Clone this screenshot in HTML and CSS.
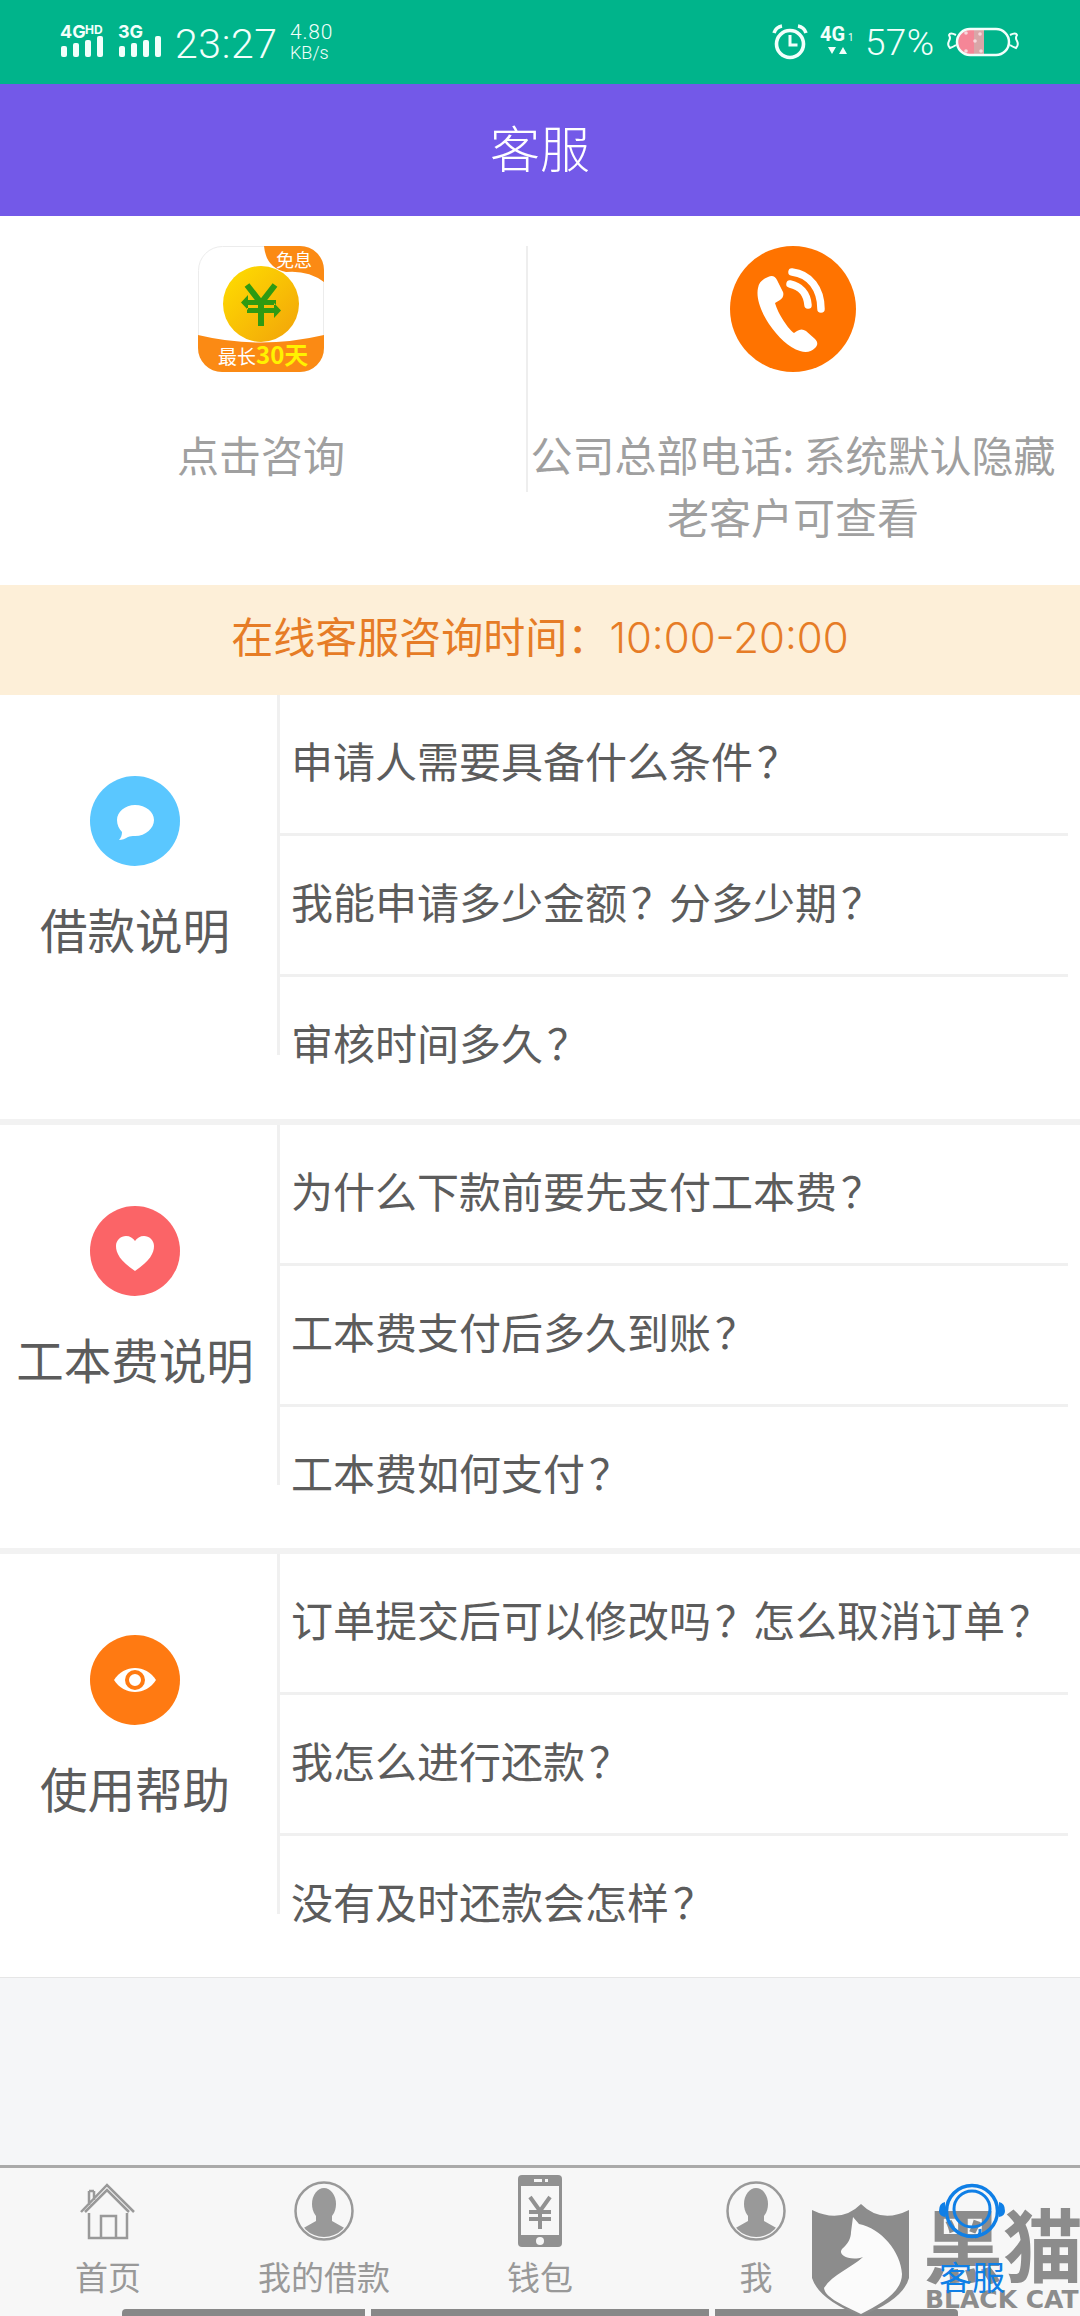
FILE: index.html
```html
<!DOCTYPE html>
<html lang="zh-CN">
<head>
<meta charset="utf-8">
<title>客服</title>
<link rel="stylesheet" href="styles.css">
</head>
<body>
<div class="app">
  <header class="status">
    <svg class="sig sig-a" width="50" height="40" viewBox="0 0 50 40">
      <text x="0" y="15" class="sig-big">4G</text><text x="25" y="11" class="sig-small">HD</text>
      <rect x="1" y="23" width="6" height="11" rx="2"/><rect x="13" y="20" width="6" height="14" rx="2"/><rect x="25" y="17" width="6" height="17" rx="2"/><rect x="37" y="13" width="6" height="21" rx="2"/>
    </svg>
    <svg class="sig sig-b" width="46" height="40" viewBox="0 0 46 40">
      <text x="0" y="15" class="sig-big">3G</text>
      <rect x="1" y="23" width="6" height="11" rx="2"/><rect x="13" y="20" width="6" height="14" rx="2"/><rect x="25" y="17" width="6" height="17" rx="2"/><rect x="37" y="13" width="6" height="21" rx="2"/>
    </svg>
    <span class="time">23:27</span>
    <span class="speed"><span class="speed-v">4.80</span><span class="speed-u">KB/s</span></span>
    <span class="status-fill"></span>
    <svg class="alarm" width="36" height="36" viewBox="0 0 36 36" fill="none" stroke="#f2fffb">
      <circle cx="18" cy="20" r="13.5" stroke-width="3.6"/>
      <path d="M18 11v10h7.500" stroke-width="3"/>
      <path d="M2 9Q4 3 10 2" stroke-width="3.600"/><path d="M34 9Q32 3 26 2" stroke-width="3.600"/>
    </svg>
    <svg class="net" width="36" height="36" viewBox="0 0 36 36">
      <text x="0" y="17" class="net-a">4G</text><text x="28" y="17" class="net-b">1</text>
      <path d="M8 23h8l-4 7zM19 30h8l-4-7z"/>
    </svg>
    <span class="pct">57%</span>
    <svg class="batt" width="74" height="30" viewBox="0 0 74 30">
      <path d="M24 2h12v26H24a13 13 0 0 1 0-26z" fill="#f58697"/>
      <path d="M28 2h10v26H28z" fill="#d9a6a8" />
      <g fill="#f7d8dc"><circle cx="20" cy="6" r="1.800"/><circle cx="29" cy="14" r="1.800"/><circle cx="34" cy="7" r="1.800"/><circle cx="20" cy="24" r="1.800"/><circle cx="35" cy="24" r="1.800"/></g>
      <rect x="11" y="2" width="52" height="26" rx="13" fill="none" stroke="#f2fffb" stroke-width="2.500"/>
      <path d="M10 8Q4 5 3 8q2 3 0 6q-2 4 1 7q3-1 6-3" fill="none" stroke="#f2fffb" stroke-width="2"/>
      <path d="M64 8q6-3 7 0q-2 3 0 6q2 4-1 7q-3-1-6-3" fill="none" stroke="#f2fffb" stroke-width="2"/>
    </svg>
  </header>

  <div class="nav">客服</div>

  <section class="contact">
    <div class="contact-col contact-left">
      <svg class="contact-icon" width="126" height="126" viewBox="0 0 126 126">
        <defs>
          <linearGradient id="coin" x1="0" y1="0" x2="1" y2="1"><stop offset="0" stop-color="#ffdf00"/><stop offset="1" stop-color="#f2a20a"/></linearGradient>
          <clipPath id="rr"><rect width="126" height="126" rx="24"/></clipPath>
        </defs>
        <rect x=".5" y=".5" width="125" height="125" rx="24" fill="#fff" stroke="#ececec"/>
        <g clip-path="url(#rr)">
          <path d="M66 0H126V36Q110 24 88 26Q68 22 66 0z" fill="#fb8a14"/>
          <path d="M0 89Q62 104 126 89V126H0z" fill="#fb8a14"/>
        </g>
        <circle cx="63" cy="58" r="38" fill="url(#coin)"/>
        <path d="M49 39l14 18 14-18M63 57v23" fill="none" stroke="#2f9a12" stroke-width="6"/>
        <path d="M50 54h28v5H50v5l-7-7.500 7-7.500zM76 62H49v5h27v5l7-7.500-7-7.500z" fill="#2f9a12"/>
        <text x="78" y="21" class="app-free">免息</text>
        <text x="20" y="118" class="app-long">最长</text>
        <text x="58" y="118" class="app-30">30天</text>
      </svg>
      <div class="contact-text">点击咨询</div>
    </div>
    <div class="contact-col contact-right">
      <svg class="contact-icon" width="126" height="126" viewBox="0 0 126 126">
        <circle cx="63" cy="63" r="63" fill="#ff7300"/>
        <path d="M28 42c-2 9 2 22 11 36 9 13 20 24 31 27 6 2 11 1 15-3 3-3 3-6 0-9l-9-8c-3-2-6-2-9 0l-3 2c-5-3-16-19-19-30l5-3c3-2 4-5 3-8l-6-12c-2-4-5-5-9-3-5 2-9 5-10 11z" fill="#fff"/>
        <path d="M60 38c10 2 17 9 18 21M62 26c18 2 29 17 29 37" fill="none" stroke="#fff" stroke-width="7.500" stroke-linecap="round"/>
      </svg>
      <div class="contact-text">公司总部电话: 系统默认隐藏<br>老客户可查看</div>
    </div>
  </section>

  <div class="banner">在线客服咨询时间：<span class="banner-time">10:00-20:00</span></div>

  <section class="group">
    <div class="aside">
      <svg class="badge" width="90" height="90" viewBox="0 0 90 90">
        <circle cx="45" cy="45" r="45" fill="#5ac7ff"/>
        <path d="M45 29c11 0 19 7 19 15s-8 16-19 16c-3 0-5 0-7 1-3 2-6 3-9 3 2-2 3-5 3-8-3-3-5-7-5-12 0-8 8-15 18-15z" fill="#fff"/>
      </svg>
      <div class="label">借款说明</div>
    </div>
    <ul class="rows">
      <li class="row">申请人需要具备什么条件<span class="q">？</span></li>
      <li class="row">我能申请多少金额<span class="q">？</span>分多少期<span class="q">？</span></li>
      <li class="row">审核时间多久<span class="q">？</span></li>
    </ul>
  </section>

  <section class="group">
    <div class="aside">
      <svg class="badge" width="90" height="90" viewBox="0 0 90 90">
        <circle cx="45" cy="45" r="45" fill="#fb6467"/>
        <path d="M45 65C30 55 26 47 26 40c0-6 5-10 10-10 4 0 7 2 9 5 2-3 5-5 9-5 5 0 10 4 10 10 0 7-4 15-19 25z" fill="#fff"/>
      </svg>
      <div class="label">工本费说明</div>
    </div>
    <ul class="rows">
      <li class="row">为什么下款前要先支付工本费<span class="q">？</span></li>
      <li class="row">工本费支付后多久到账<span class="q">？</span></li>
      <li class="row">工本费如何支付<span class="q">？</span></li>
    </ul>
  </section>

  <section class="group group-last">
    <div class="aside">
      <svg class="badge" width="90" height="90" viewBox="0 0 90 90">
        <circle cx="45" cy="45" r="45" fill="#ff7a12"/>
        <path d="M24 45c5-8 13-12 21-12s16 4 21 12c-5 8-13 12-21 12s-16-4-21-12z" fill="#fff"/>
        <circle cx="45" cy="45" r="8" fill="none" stroke="#ff7a12" stroke-width="4"/>
      </svg>
      <div class="label">使用帮助</div>
    </div>
    <ul class="rows">
      <li class="row">订单提交后可以修改吗<span class="q">？</span>怎么取消订单<span class="q">？</span></li>
      <li class="row">我怎么进行还款<span class="q">？</span></li>
      <li class="row">没有及时还款会怎样<span class="q">？</span></li>
    </ul>
  </section>

  <div class="spacer"></div>

  <nav class="tabs">
    <div class="tab">
      <span class="tab-icon">
        <svg width="56" height="56" viewBox="0 0 56 56" fill="none" stroke="#999" stroke-width="2.500">
          <path d="M1 29L27 2l27 27M5 29L27 7l22 22M9 30v25h38V30M21 55V33h15v22M9 8v14M14 8v9M9 8h5"/>
        </svg>
      </span>
      <span class="tab-label">首页</span>
    </div>
    <div class="tab">
      <span class="tab-icon">
        <svg width="60" height="60" viewBox="0 0 60 60">
          <defs><clipPath id="av"><circle cx="30" cy="30" r="26"/></clipPath></defs>
          <circle cx="30" cy="30" r="28.500" fill="none" stroke="#999" stroke-width="2.500"/>
          <g clip-path="url(#av)" fill="#999"><ellipse cx="30" cy="23" rx="12" ry="16"/><path d="M22 32h16v8l16 9v12H6V49l16-9z"/></g>
        </svg>
      </span>
      <span class="tab-label">我的借款</span>
    </div>
    <div class="tab">
      <span class="tab-icon">
        <svg width="44" height="72" viewBox="0 0 44 72">
          <rect width="44" height="72" rx="4" fill="#919191"/>
          <rect x="3" y="11" width="38" height="49" fill="#f7f7f7"/>
          <rect x="16" y="4" width="8" height="3" fill="#f7f7f7"/><rect x="27" y="4" width="3" height="3" fill="#f7f7f7"/>
          <ellipse cx="22" cy="66" rx="4" ry="4" fill="#f7f7f7"/>
          <path d="M12 22l10 14 10-14M11 37h22M11 44h22M22 36v18" fill="none" stroke="#919191" stroke-width="4"/>
        </svg>
      </span>
      <span class="tab-label">钱包</span>
    </div>
    <div class="tab">
      <span class="tab-icon">
        <svg width="60" height="60" viewBox="0 0 60 60">
          <circle cx="30" cy="30" r="28.500" fill="none" stroke="#999" stroke-width="2.500"/>
          <g clip-path="url(#av)" fill="#999"><ellipse cx="30" cy="23" rx="12" ry="16"/><path d="M22 32h16v8l16 9v12H6V49l16-9z"/></g>
        </svg>
      </span>
      <span class="tab-label">我</span>
    </div>
    <div class="tab tab-active">
      <span class="tab-icon">
        <svg width="66" height="54" viewBox="0 0 66 54" fill="none" stroke="#0f7fe6">
          <circle cx="33" cy="27" r="25.500" stroke-width="3.500"/>
          <circle cx="33" cy="25" r="18" stroke-width="3"/>
          <path d="M6 18Q0 19 0 27q0 5 6 6zM60 18q6 1 6 9q0 5-6 6z" fill="#0f7fe6" stroke="none"/>
          <path d="M36 53q6-1 5-8" stroke-width="3"/>
        </svg>
      </span>
      <span class="tab-label">客服</span>
    </div>
    <div class="watermark" aria-hidden="true">
      <svg class="shield" width="100" height="116" viewBox="0 0 100 116">
        <path d="M1 8Q30 22 50 2Q70 22 98 8V76Q92 98 50 114Q8 98 1 76z" fill="#8c8c8c"/>
        <path d="M42 15l6 7C70 26 90 50 91 72 91 90 70 102 50 112 34 104 14 96 13 86 22 72 40 66 52 55 44 58 36 56 33 54 30 52 29 50 31 47 37 42 40 36 40 30z" fill="#fbfbfb"/>
      </svg>
      <div class="wm-text">
        <span class="wm-cn">黑猫</span>
        <span class="wm-en">BLACK CAT</span>
      </div>
    </div>
    <div class="homebar"><i class="bar-a"></i><i class="bar-b"></i><i class="bar-c"></i></div>
  </nav>
</div>
</body>
</html>
```
FILE: styles.css
```css
* { box-sizing: border-box; margin: 0; padding: 0; }
html, body { width: 1080px; height: 2316px; overflow: hidden; }
body {
  font-family: "Noto Sans CJK SC", "Noto Sans", sans-serif;
  background: #f5f6f8;
}
.app { display: flex; flex-direction: column; height: 2316px; }
svg { overflow: visible; }

.status {
  height: 84px; flex: none; background: #00b48b; color: #f2fffb;
  display: flex; align-items: flex-start; padding-left: 60px;
}
.sig { margin-top: 23px; fill: #f2fffb; flex: none; }
.sig-a { margin-right: 8px; }
.sig-b { margin-right: 11px; }
.sig-big { font: 700 18px Inter, "Liberation Sans", sans-serif; }
.sig-small { font: 700 12px Inter, "Liberation Sans", sans-serif; }
.time { font: 300 41px/44px Roboto, sans-serif; margin-top: 22px; letter-spacing: .6px; width: 115px; }
.speed { display: flex; flex-direction: column; margin-top: 22px; font-family: Roboto, sans-serif; font-weight: 300; }
.speed-v { font-size: 21px; line-height: 21px; letter-spacing: .8px; }
.speed-u { font-size: 18px; line-height: 20px; }
.status-fill { flex: 1; }
.alarm { margin-top: 24px; margin-right: 12px; flex: none; }
.net { margin-top: 24px; margin-right: 9px; fill: #f2fffb; flex: none; }
.net-a { font: 700 20px Roboto, sans-serif; }
.net-b { font: 400 10px Roboto, sans-serif; }
.pct { font: 300 37px/44px Roboto, sans-serif; margin-top: 21px; width: 81px; letter-spacing: .3px; }
.batt { margin-top: 27px; margin-right: 60px; flex: none; }

.nav {
  height: 132px; flex: none; background: #7359e8; color: #fff;
  font-size: 50px; line-height: 125px; text-align: center; font-weight: 300;
}

.contact { height: 369px; flex: none; background: #fff; display: flex; padding-top: 30px; }
.contact-col { display: flex; flex-direction: column; align-items: center; }
.contact-left { width: 528px; height: 246px; border-right: 2px solid #eeeeee; padding-right: 4px; }
.contact-right { flex: 1; padding-right: 22px; }
.contact-icon { display: block; flex: none; }
.contact-text {
  margin-top: 51px; font-size: 42px; line-height: 62px; color: #a0a0a0;
  text-align: center; white-space: nowrap;
}
.app-free { font-size: 18px; fill: #fff; }
.app-long { font-size: 19px; fill: #fff; }
.app-30 { font: 700 24px "Noto Sans CJK SC", sans-serif; fill: #fff200; }

.banner {
  height: 110px; flex: none; background: #fdefd8; color: #e67c26;
  font-size: 42px; line-height: 100px; text-align: center; white-space: nowrap;
}
.banner-time { font-family: Inter, Roboto, sans-serif; font-weight: 300; }

.group {
  height: 429.500px; flex: none; background: #fff; display: flex; align-items: flex-start;
  border-bottom: 6px solid #f2f2f2;
}
.group-last { height: 424px; border-bottom: 1px solid #e6e6e6; }
.aside {
  width: 280px; height: 360px; flex: none; border-right: 3px solid #f0f0f0;
  display: flex; flex-direction: column; align-items: center; padding: 81px 7px 0 0;
}
.badge { display: block; flex: none; }
.label { margin-top: 32px; font-size: 47.500px; line-height: 62px; color: #5c5c5c; white-space: nowrap; }
.rows { list-style: none; width: 788px; flex: none; }
.row {
  height: 141px; padding: 18px 0 0 11px; font-size: 42px; line-height: 94px; color: #5c5c5c;
  border-bottom: 3px solid #f0f0f0; white-space: nowrap;
}
.row:last-child { border-bottom: 0; }
.q { font-family: "Noto Sans CJK TC", sans-serif; position: relative; left: 4px; }

.spacer { flex: 1; }

.tabs {
  height: 151px; flex: none; background: #f7f7f7; display: flex; position: relative;
  border-top: 3px solid #aaa;
}
.tab { width: 216px; display: flex; flex-direction: column; align-items: center; }
.tab-icon { height: 86px; display: flex; align-items: center; justify-content: center; }
.tab-icon svg { display: block; }
.tab-label { font-size: 33px; line-height: 44px; color: #999; white-space: nowrap; }
.tab-active { position: relative; z-index: 2; }
.tab-active .tab-label { color: #0f7fe6; }

.watermark { position: absolute; left: 811px; top: 34px; display: flex; z-index: 1; color: #8c8c8c; }
.shield { display: block; }
.wm-text { margin-left: 12px; display: flex; flex-direction: column; }
.wm-cn { font-size: 80px; line-height: 78px; font-weight: 700; white-space: nowrap; }
.wm-en { font: 700 25px/26px "DejaVu Sans", sans-serif; white-space: nowrap; margin: 7px 0 0 2px; }

.homebar { position: absolute; left: 122px; bottom: 0; display: flex; gap: 6px; height: 7px; z-index: 0; }
.homebar i { display: block; height: 7px; background: #888; }
.bar-a { width: 243px; border-radius: 4px 0 0 0; }
.bar-b { width: 338px; }
.bar-c { width: 243px; border-radius: 0 4px 0 0; }
```
